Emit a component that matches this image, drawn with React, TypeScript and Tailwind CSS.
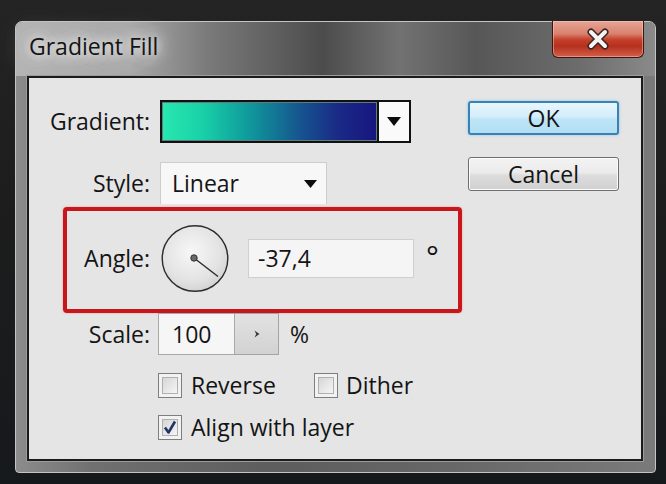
import React from "react";

const Checkbox = ({ checked = false }: { checked?: boolean }) => (
  <div className="flex h-[25px] w-[24px] items-center justify-center border border-[#7e7e7e] bg-[#f2f2f2]">
    <div className="relative flex h-[17px] w-[16px] items-center justify-center border border-[#b0b0b0] bg-[linear-gradient(135deg,#d6d6d6_0%,#e9e9e9_60%,#f5f5f5_100%)]">
      {checked && (
        <svg width="16" height="17" viewBox="0 0 16 17" className="absolute -left-px -top-px">
          <path d="M3 8.5 L6.5 13.5 L13 2.5" fill="none" stroke="#233566" strokeWidth="2.6" strokeLinejoin="round" />
        </svg>
      )}
    </div>
  </div>
);

const AngleDial = () => (
  <svg width="68" height="69" viewBox="0 0 68 69">
    <defs>
      <radialGradient id="dial" cx="45%" cy="40%" r="65%">
        <stop offset="0%" stopColor="#f7f7f7" />
        <stop offset="70%" stopColor="#e2e2e2" />
        <stop offset="100%" stopColor="#cfcfcf" />
      </radialGradient>
    </defs>
    <circle cx="34" cy="34.5" r="32.8" fill="url(#dial)" stroke="#2b2b2b" strokeWidth="1.4" />
    <line x1="33" y1="34" x2="57" y2="52.5" stroke="#2a2a2a" strokeWidth="1.4" />
    <circle cx="33" cy="34" r="3.2" fill="#6a6a6a" stroke="#333" strokeWidth="1" />
  </svg>
);

export default function App() {
  const text = "font-['Open_Sans',sans-serif] text-[23px] leading-none text-[#141414]";
  return (
    <div className="h-[484px] w-[666px] overflow-hidden bg-[linear-gradient(180deg,#242424_0%,#1d1d1d_40%,#16191c_100%)] pl-[15px] pt-[21px]">
      {/* window */}
      <div className="flex h-[452px] w-[641px] flex-col rounded-b-[4px] rounded-t-[7px] border border-[#c4c4c4] bg-[linear-gradient(90deg,#8c8c8c_0%,#707070_12%,#5d5d5d_40%,#686868_70%,#7a7a7a_100%)]">
        {/* title bar */}
        <div className="flex h-[54px] items-start rounded-t-[6px] bg-[linear-gradient(90deg,#b4b4b4_0%,#a8a8a8_18%,#7a7a7a_30%,#4c4c4c_48%,#727272_60%,#575757_72%,#6c6c6c_88%,#8a8a8a_100%)]">
          <span
            className={`${text} ml-[13px] mt-[13px] [text-shadow:0_0_8px_#eeeeee,0_0_14px_#e0e0e0,0_0_22px_#d4d4d4,0_0_30px_#cccccc,0_0_40px_#c4c4c4]`}
          >
            Gradient Fill
          </span>
          <div className="-mt-px ml-auto mr-[11px] flex h-[37px] w-[92px] items-center justify-center rounded-b-[6px] border border-t-0 border-[#3a1712] bg-[linear-gradient(180deg,#e7a595_0%,#d9826f_35%,#c4402b_52%,#b5301d_70%,#d2614a_100%)] shadow-[inset_0_0_0_1px_rgba(255,210,200,0.45)]">
            <svg width="26" height="22" viewBox="0 0 26 22">
              <path d="M6 4 L20 18 M20 4 L6 18" stroke="#3b2320" strokeWidth="7" strokeLinecap="round" />
              <path d="M6 4 L20 18 M20 4 L6 18" stroke="#f4f4f4" strokeWidth="4" strokeLinecap="round" />
            </svg>
          </div>
        </div>

        {/* content */}
        <div className="mb-[11px] ml-[11px] mr-[12px] flex flex-1 border-2 border-[#1b1b1b] bg-[#e5e5e5] pt-[22px] shadow-[0_0_0_1px_#9c9c9c]">
          {/* left column */}
          <div className="flex w-[439px] flex-col">
            {/* Gradient */}
            <div className="flex h-[43px] items-center">
              <span className={`${text} w-[121px] text-right`}>Gradient:</span>
              <div className="ml-[10px] flex h-[43px] w-[251px] border-2 border-[#111]">
                <div className="flex-1 border border-[#5d7d7a] bg-[linear-gradient(90deg,#28e7b0_0%,#19d2a8_18%,#0f9a9c_40%,#16538f_65%,#1a2a86_82%,#171680_100%)]" />
                <div className="flex w-[32px] items-center justify-center border-l-2 border-[#111] bg-[#fafafa]">
                  <svg width="14" height="9" viewBox="0 0 14 9">
                    <path d="M0 0 H14 L7 9 Z" fill="#0c0c0c" />
                  </svg>
                </div>
              </div>
            </div>

            {/* Style */}
            <div className="mt-[19px] flex h-[42px] items-center">
              <span className={`${text} w-[121px] text-right`}>Style:</span>
              <div className="ml-[10px] flex h-[42px] w-[167px] items-center border border-b-0 border-[#cdcdcd] bg-[#f7f7f7] pl-[11px] pr-[9px]">
                <span className={text}>Linear</span>
                <svg width="13" height="8" viewBox="0 0 13 8" className="ml-auto">
                  <path d="M0 0 H13 L6.5 8 Z" fill="#0c0c0c" />
                </svg>
              </div>
            </div>

            {/* Angle (highlighted) */}
            <div className="ml-[34px] mt-[3px] flex h-[106px] w-[399px] items-center rounded-[4px] border-4 border-[#c8161d] pb-[3px] shadow-[0_0_2px_#e88]">
              <span className={`${text} w-[83px] text-right`}>Angle:</span>
              <div className="ml-[11px]">
                <AngleDial />
              </div>
              <div className="ml-[19px] flex h-[39px] w-[166px] items-center border border-[#cfcfcf] bg-[#f5f5f5] pl-[9px]">
                <span className={text}>-37,4</span>
              </div>
              <span className="-mt-[6px] ml-[12px] font-['Open_Sans',sans-serif] text-[30px] leading-none text-[#141414]">°</span>
            </div>

            {/* Scale */}
            <div className="flex h-[42px] items-center">
              <span className={`${text} w-[121px] text-right`}>Scale:</span>
              <div className="ml-[8px] flex h-[42px] w-[77px] items-center border border-[#a9a9a9] bg-[#f6f6f6] pl-[13px]">
                <span className={text}>100</span>
              </div>
              <div className="flex h-[42px] w-[44px] items-center justify-center border border-l-0 border-[#a4a4a4] bg-[linear-gradient(180deg,#e2e2e2_0%,#d2d2d2_100%)]">
                <svg width="6" height="8" viewBox="0 0 6 8">
                  <path d="M0.5 0.5 L5.5 4 L0.5 7.5 L2.2 4 Z" fill="#3a3a3a" />
                </svg>
              </div>
              <span className={`${text} ml-[11px]`}>%</span>
            </div>

            {/* Reverse / Dither */}
            <div className="ml-[129px] mt-[18px] flex h-[25px] items-center">
              <div className="flex w-[156px] items-center gap-[9px]">
                <Checkbox />
                <span className={text}>Reverse</span>
              </div>
              <div className="flex items-center gap-[8px]">
                <Checkbox />
                <span className={text}>Dither</span>
              </div>
            </div>

            {/* Align with layer */}
            <div className="ml-[129px] mt-[17px] flex h-[25px] items-center gap-[9px]">
              <Checkbox checked />
              <span className={text}>Align with layer</span>
            </div>
          </div>

          {/* right column */}
          <div className="mt-px flex w-[151px] flex-col">
            <div className="flex h-[34px] items-center justify-center rounded-[3px] border-2 border-[#3d80b3] bg-[linear-gradient(180deg,#e8f6fd_0%,#d4eefb_45%,#bde5f7_55%,#b2def3_100%)] shadow-[0_0_3px_#7ec8ea]">
              <span className={text}>OK</span>
            </div>
            <div className="mt-[22px] flex h-[34px] items-center justify-center rounded-[3px] border border-[#6f6f6f] bg-[linear-gradient(180deg,#f3f3f3_0%,#ebebeb_45%,#dcdcdc_55%,#d0d0d0_100%)] shadow-[inset_0_0_0_1px_#fbfbfb]">
              <span className={text}>Cancel</span>
            </div>
          </div>
        </div>
      </div>
    </div>
  );
}
